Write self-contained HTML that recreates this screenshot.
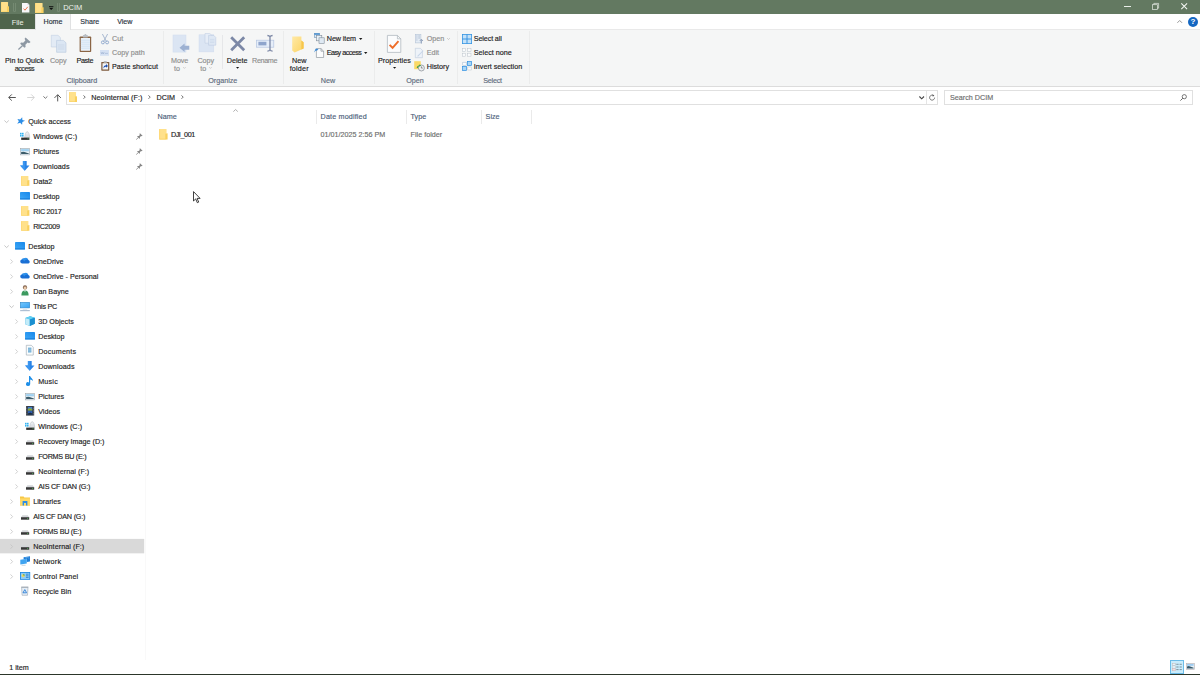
<!DOCTYPE html>
<html><head><meta charset="utf-8"><title>DCIM</title>
<style>
*{margin:0;padding:0;box-sizing:border-box}
html,body{width:1200px;height:675px;overflow:hidden;background:#fff}
body{position:relative;font-family:"Liberation Sans",sans-serif;font-size:7.2px;color:#1c1c1c;line-height:1}
.a{position:absolute;display:block}
.t{position:absolute;white-space:nowrap;line-height:10px;height:10px;-webkit-text-stroke:.15px currentColor}
.g{color:#8e8e8e}
.c{text-align:center}
svg{overflow:visible}
</style></head><body>
<svg class="a" width="0" height="0" style="left:0;top:0"><defs><linearGradient id="dg" x1="0" y1="1" x2="1" y2="0"><stop offset="0" stop-color="#3fa9f7"/><stop offset="1" stop-color="#1787ea"/></linearGradient><linearGradient id="pcg" x1="0" y1="0" x2="1" y2="1"><stop offset="0" stop-color="#74c7fc"/><stop offset="1" stop-color="#36a2f4"/></linearGradient><linearGradient id="nf" x1="0" y1="0" x2="1" y2="1"><stop offset="0" stop-color="#ffe9a6"/><stop offset="1" stop-color="#fcd462"/></linearGradient></defs></svg>
<div class="a" style="left:0px;top:0px;width:1200px;height:14px;background:#637961;"></div>
<svg class="a" style="left:1.2px;top:2px" width="8" height="10" viewBox="0 0 8.4 10" preserveAspectRatio="none"><rect x="0" y="0" width="7.4" height="10" rx=".5" fill="#ffe18b"/><path d="M6.2 4.5 L8.4 4.2 L8.4 10 L0.6 10 L0.6 9.4 L6.2 9.4 Z" fill="#f9d05e"/><rect x="0" y="0" width="1" height="10" fill="#ffd670" opacity=".6"/></svg>
<svg class="a" style="left:13px;top:3px" width="3" height="9" viewBox="0 0 3 9" ><path d="M.5 0 V8 Q.5 8.6 1.1 8.6 H1.9 Q2.5 8.6 2.5 8 V0" fill="none" stroke="#8c9e89" stroke-width=".45"/></svg>
<svg class="a" style="left:22px;top:2.8px" width="7.4" height="9.4" viewBox="0 0 7.4 9.4" ><path d="M0 0 H5.6 L7.4 1.8 V9.4 H0Z" fill="#f7f8f9"/><path d="M5.6 0 V1.8 H7.4Z" fill="#c5cbd1"/><path d="M1.6 5.6 L3 7.2 L5.8 3.8" fill="none" stroke="#e8734a" stroke-width="1"/></svg>
<svg class="a" style="left:35.2px;top:2.6px" width="8.6" height="10" viewBox="0 0 8.4 10" preserveAspectRatio="none"><rect x="0" y="0" width="7.4" height="10" rx=".5" fill="#ffe18b"/><path d="M6.2 4.5 L8.4 4.2 L8.4 10 L0.6 10 L0.6 9.4 L6.2 9.4 Z" fill="#f9d05e"/><rect x="0" y="0" width="1" height="10" fill="#ffd670" opacity=".6"/></svg>
<svg class="a" style="left:48.8px;top:6.2px" width="4.4" height="4.2" viewBox="0 0 4.4 4.2" ><rect x="0" y="0" width="4.4" height=".8" fill="#111"/><path d="M0 1.7 H4.4 L2.2 4.1Z" fill="#111"/></svg>
<svg class="a" style="left:56.8px;top:3px" width="3" height="9" viewBox="0 0 3 9" ><path d="M.5 0 V8 Q.5 8.6 1.1 8.6 H1.9 Q2.5 8.6 2.5 8 V0" fill="none" stroke="#8c9e89" stroke-width=".45"/></svg>
<div class="t " style="left:63.2px;top:3px;color:#eef1ec;font-size:7.5px;-webkit-text-stroke:0">DCIM</div>
<div class="a" style="left:1124.2px;top:5.8px;width:6.6px;height:0.8px;background:#e9eee8;"></div>
<svg class="a" style="left:1152px;top:3px" width="7" height="7" viewBox="0 0 7 7" ><rect x=".4" y="1.7" width="5" height="4.9" fill="none" stroke="#e6ebe5" stroke-width=".7"/><path d="M1.8 1.7 V.4 H6.6 V5.2 H5.4" fill="none" stroke="#e6ebe5" stroke-width=".7"/></svg>
<svg class="a" style="left:1181.2px;top:3.2px" width="6.4" height="6.4" viewBox="0 0 6.4 6.4" ><path d="M.3 .3 L6.1 6.1 M6.1 .3 L.3 6.1" stroke="#f4f7f3" stroke-width="1.05"/></svg>
<div class="a" style="left:0px;top:14px;width:1200px;height:14.8px;background:#fff;"></div>
<div class="a" style="left:0px;top:13.8px;width:35px;height:14.8px;background:#4f644c;"></div>
<div class="t c " style="left:-42.4px;width:120px;top:18px;color:#f0f2ea;font-size:7.3px;-webkit-text-stroke:0">File</div>
<div class="a" style="left:0px;top:28.8px;width:1200px;height:58.2px;background:#f5f6f6;border-top:1px solid #e9e9e9;border-bottom:1px solid #dcdcdc"></div>
<div class="a" style="left:35px;top:14px;width:36px;height:15.8px;background:#f5f6f6;border:1px solid #e0e1e2;border-bottom:none;border-top:none"></div>
<div class="t c " style="left:-7px;width:120px;top:17px;font-size:7.1px;color:#2a3340">Home</div>
<div class="t c " style="left:29.799999999999997px;width:120px;top:17px;font-size:7.1px;color:#2a3340">Share</div>
<div class="t c " style="left:64.8px;width:120px;top:17px;font-size:7.1px;color:#2a3340">View</div>
<svg class="a" style="left:1176.7px;top:19.7px" width="5.4" height="3.2" viewBox="0 0 5.4 3.2" ><path d="M.4 2.8 L2.7 .5 L5 2.8" fill="none" stroke="#8a8a8a" stroke-width=".9"/></svg>
<div class="a" style="left:1187.9px;top:16.6px;width:10px;height:10px;border-radius:5px;background:#1467c2;color:#fff;font-weight:bold;font-size:8px;line-height:10px;text-align:center">?</div>
<div class="a" style="left:163.2px;top:31.4px;width:0.8px;height:52.4px;background:#ebecec;"></div>
<div class="a" style="left:283.1px;top:31.4px;width:0.8px;height:52.4px;background:#ebecec;"></div>
<div class="a" style="left:373.6px;top:31.4px;width:0.8px;height:52.4px;background:#ebecec;"></div>
<div class="a" style="left:456.70000000000005px;top:31.4px;width:0.8px;height:52.4px;background:#ebecec;"></div>
<div class="a" style="left:528.9px;top:31.4px;width:0.8px;height:52.4px;background:#ebecec;"></div>
<div class="a" style="left:221.7px;top:35px;width:0.8px;height:34px;background:#e6e7e9;"></div>
<div class="t c " style="left:21.799999999999997px;width:120px;top:76px;color:#5d6b7c">Clipboard</div>
<div class="t c " style="left:162.8px;width:120px;top:76px;color:#5d6b7c">Organize</div>
<div class="t c " style="left:268px;width:120px;top:76px;color:#5d6b7c">New</div>
<div class="t c " style="left:355px;width:120px;top:76px;color:#5d6b7c">Open</div>
<div class="t c " style="left:432.5px;width:120px;top:76px;color:#5d6b7c;letter-spacing:-.25px">Select</div>
<svg class="a" style="left:17.8px;top:37.3px" width="13" height="12.6" viewBox="0 0 13 12.6" ><path d="M7.6 .4 L12.6 5 L11 6.2 L9.6 5.6 L7.4 7.8 L7.6 10 L6.4 10.8 L2.2 6.8 L3 5.6 L5.2 5.8 L7.4 3.6 L6.6 1.8Z" fill="#8d98a3"/><path d="M4.4 8.8 L.4 12.4" stroke="#8d98a3" stroke-width="1.3"/></svg>
<div class="t c " style="left:-35.6px;width:120px;top:56px;">Pin to Quick</div>
<div class="t c " style="left:-35.6px;width:120px;top:64px;letter-spacing:-.5px">access</div>
<svg class="a" style="left:51px;top:35px" width="15.4" height="17.6" viewBox="0 0 15.4 17.6" ><path d="M.3 .3 H7 L9.4 2.6 V12 H.3Z" fill="#e3ebf5" stroke="#c3d0e2" stroke-width=".6"/><path d="M5.6 5.4 H12.4 L15 7.8 V17.3 H5.6Z" fill="#dbe6f3" stroke="#b7c7de" stroke-width=".6"/><path d="M7 10H13.4M7 12H13.4M7 14H13.4" stroke="#c5d3e6" stroke-width=".6"/></svg>
<div class="t c g" style="left:-1.7000000000000028px;width:120px;top:56px;">Copy</div>
<svg class="a" style="left:78.6px;top:34.2px" width="12.8" height="18.4" viewBox="0 0 12.8 18.4" ><rect x=".6" y="2.4" width="11.6" height="15.6" rx=".8" fill="#8a6545"/><rect x="1.8" y="4" width="9.2" height="12.8" fill="#e9f2fa"/><path d="M1.8 6.2H11M1.8 8.2H11M1.8 10.2H11M1.8 12.2H11M1.8 14.2H11" stroke="#c4dcf0" stroke-width=".6"/><rect x="4" y="1" width="4.8" height="2.6" rx=".6" fill="#b9bec4"/><rect x="5.6" y="0" width="1.6" height="1.6" fill="#b9bec4"/></svg>
<div class="t c " style="left:24.799999999999997px;width:120px;top:56px;letter-spacing:-.4px">Paste</div>
<svg class="a" style="left:101px;top:33.8px" width="8" height="10.4" viewBox="0 0 8 10.4" ><path d="M1.4 0 L5.4 7.6 M6.6 0 L2.6 7.6" stroke="#9fb1cc" stroke-width=".9" fill="none"/><circle cx="1.9" cy="8.4" r="1.5" fill="none" stroke="#7f9cc6" stroke-width=".8"/><circle cx="6.1" cy="8.4" r="1.5" fill="none" stroke="#7f9cc6" stroke-width=".8"/></svg>
<div class="t g" style="left:112px;top:34px;">Cut</div>
<svg class="a" style="left:100px;top:50px" width="9" height="5.8" viewBox="0 0 9 5.8" ><rect width="9" height="5.8" fill="#d5e1f3"/><path d="M1 2 L1.8 4 L2.6 2.4 L3.4 4 L4.2 2 M5 3.4 H8" stroke="#8fa5c8" stroke-width=".5" fill="none"/></svg>
<div class="t g" style="left:112px;top:48px;">Copy path</div>
<svg class="a" style="left:100.6px;top:61.2px" width="8.6" height="10" viewBox="0 0 8.6 10" ><rect x=".3" y="1" width="8" height="8.7" rx=".6" fill="#7d5a3c"/><rect x="1.5" y="2.2" width="5.6" height="6.3" fill="#f3f6f9"/><rect x="2.8" y="0" width="3" height="1.8" rx=".4" fill="#b9bec4"/><path d="M2.4 7.6 C2.4 5.2 3.6 4.2 5 4.2 V3 L7 4.9 L5 6.8 V5.7 C3.8 5.7 3 6.2 2.4 7.6Z" fill="#1a4db0"/></svg>
<div class="t " style="left:112px;top:62px;">Paste shortcut</div>
<svg class="a" style="left:173px;top:35.2px" width="16.6" height="17.4" viewBox="0 0 16.6 17.4" ><rect width="13" height="17.1" fill="#dbe5f3" stroke="#d0dcee" stroke-width=".5"/><path d="M16.3 10.8 V14.8 H11.6 V17.1 L6.5 12.8 L11.6 8.5 V10.8Z" fill="#9db1d2"/></svg>
<div class="t c g" style="left:119.6px;width:120px;top:56px;letter-spacing:-.15px">Move</div>
<div class="t g" style="left:174px;top:64px;">to</div>
<svg class="a" style="left:182.6px;top:67px" width="2.8" height="1.7" viewBox="0 0 2.8 1.7" ><path d="M.2 .2 L1.4 1.4 L2.6 .2" stroke="#b0b0b0" stroke-width=".6" fill="none"/></svg>
<svg class="a" style="left:199.1px;top:33.4px" width="17" height="19.2" viewBox="0 0 17 19.2" ><rect x="0" y="1.8" width="14.8" height="17.1" fill="#dbe5f3" stroke="#d0dcee" stroke-width=".5"/><path d="M6 .5 H10.8 L12.6 2.2 V10.2 H6Z" fill="#e6edf7" stroke="#bccbe0" stroke-width=".5"/><path d="M9.6 2.4 H14.8 L16.8 4.4 V12.2 H9.6Z" fill="#dfe8f4" stroke="#b7c7de" stroke-width=".5"/><path d="M11 6.4H15.4M11 8H15.4M11 9.6H15.4" stroke="#c2d0e4" stroke-width=".5"/></svg>
<div class="t c g" style="left:145.8px;width:120px;top:56px;">Copy</div>
<div class="t g" style="left:200.3px;top:64px;">to</div>
<svg class="a" style="left:208.9px;top:67px" width="2.8" height="1.7" viewBox="0 0 2.8 1.7" ><path d="M.2 .2 L1.4 1.4 L2.6 .2" stroke="#b0b0b0" stroke-width=".6" fill="none"/></svg>
<svg class="a" style="left:229.8px;top:36px" width="15.4" height="15.4" viewBox="0 0 15.4 15.4" ><path d="M1.2 1.2 L14.2 14.2 M14.2 1.2 L1.2 14.2" stroke="#7c88a6" stroke-width="2.8"/></svg>
<div class="t c " style="left:177.2px;width:120px;top:56px;">Delete</div>
<svg class="a" style="left:235.6px;top:67.2px" width="3.2" height="1.8" viewBox="0 0 3.2 1.8" ><path d="M0 0 H3.2 L1.6 1.8Z" fill="#111"/></svg>
<svg class="a" style="left:255.8px;top:35.2px" width="18.4" height="16.6" viewBox="0 0 18.4 16.6" ><rect x=".4" y="5.2" width="17.4" height="7" fill="#e6eef9" stroke="#b4c5e0" stroke-width=".7"/><rect x="2.4" y="6.8" width="8" height="3.6" fill="#8fa5cc"/><path d="M11.4 .5 C12.8 .5 13.6 1 14 1.8 C14.4 1 15.2 .5 16.6 .5 M11.4 16.1 C12.8 16.1 13.6 15.6 14 14.8 C14.4 15.6 15.2 16.1 16.6 16.1 M14 1.8 V14.8" stroke="#7c88a6" stroke-width="1.3" fill="none"/></svg>
<div class="t c g" style="left:204.60000000000002px;width:120px;top:56px;letter-spacing:-.36px">Rename</div>
<svg class="a" style="left:292px;top:36px" width="11.8" height="16.6" viewBox="0 0 11.8 16.6" ><path d="M.2 .6 H9.4 V4.6 L11.6 6.2 V12.6 L2.6 16.4 L.2 14.6Z" fill="url(#nf)"/><path d="M9.4 4.6 L11.6 6.2 V12.6 L9.4 13.5Z" fill="#f6c64c"/></svg>
<div class="t c " style="left:239.2px;width:120px;top:56px;">New</div>
<div class="t c " style="left:239.2px;width:120px;top:64px;letter-spacing:.18px">folder</div>
<svg class="a" style="left:314px;top:33.2px" width="10.6" height="10.6" viewBox="0 0 10.6 10.6" ><rect x=".3" y=".3" width="5.4" height="4.4" fill="#dbeaf7" stroke="#6f94b8" stroke-width=".6"/><rect x=".3" y=".3" width="5.4" height="1.5" fill="#4a90d0"/><rect x="2.6" y="2.6" width="5.2" height="5.2" fill="#e9f1f8" stroke="#7f8c98" stroke-width=".6"/><rect x="5" y="4.8" width="5.2" height="5.5" fill="#dfe9f3" stroke="#7f8c98" stroke-width=".6"/></svg>
<div class="t " style="left:326.8px;top:34px;letter-spacing:-.1px">New item</div>
<svg class="a" style="left:358.5px;top:37.8px" width="3.4" height="2" viewBox="0 0 3.4 2" ><path d="M0 0 H3.4 L1.7 2Z" fill="#1a1a1a"/></svg>
<svg class="a" style="left:314.2px;top:47.2px" width="10" height="10.8" viewBox="0 0 10 10.8" ><path d="M2.4 1.6 H7 L9.6 4.2 V10.5 H2.4Z" fill="#fbfcfd" stroke="#7f8890" stroke-width=".6"/><path d="M7 1.6 V4.2 H9.6" fill="none" stroke="#7f8890" stroke-width=".6"/><path d="M0 5.6 L1.6 1.8 L4.6 1.8 L3.2 3.6 L1.6 3.8 Z" fill="#3b8ad6"/></svg>
<div class="t " style="left:326.8px;top:48px;letter-spacing:-.52px">Easy access</div>
<svg class="a" style="left:364.2px;top:51.7px" width="3.4" height="2" viewBox="0 0 3.4 2" ><path d="M0 0 H3.4 L1.7 2Z" fill="#1a1a1a"/></svg>
<svg class="a" style="left:387px;top:35px" width="14.2" height="17.8" viewBox="0 0 14.2 17.8" ><path d="M.4 .4 H10.4 L13.8 3.8 V17.4 H.4Z" fill="#fbfcfd" stroke="#a9b1b9" stroke-width=".7"/><path d="M10.4 .4 V3.8 H13.8" fill="none" stroke="#a9b1b9" stroke-width=".7"/><path d="M2.6 9.8 L5.6 12.8 L11.5 6.2" fill="none" stroke="#ee6d2a" stroke-width="1.9"/></svg>
<div class="t c " style="left:334.4px;width:120px;top:56px;">Properties</div>
<svg class="a" style="left:392.6px;top:67.3px" width="3.2" height="1.8" viewBox="0 0 3.2 1.8" ><path d="M0 0 H3.2 L1.6 1.8Z" fill="#111"/></svg>
<svg class="a" style="left:415.2px;top:33.8px" width="8.2" height="9.8" viewBox="0 0 8.2 9.8" ><rect x=".3" y=".3" width="5.6" height="8.6" fill="#e4ecf5" stroke="#b6c4d6" stroke-width=".6"/><path d="M1.4 2H2.4M1.4 4H2.4M1.4 6H2.4M3.4 2H4.8M3.4 4H4.8" stroke="#8a9db8" stroke-width=".7"/><path d="M6.4 9.6 V5.6 M4.8 7 L6.4 5.2 L8 7" stroke="#8a9db8" stroke-width=".9" fill="none"/></svg>
<div class="t g" style="left:426.7px;top:34px;">Open</div>
<svg class="a" style="left:447.4px;top:38px" width="3" height="1.8" viewBox="0 0 3 1.8" ><path d="M.2 .2 L1.5 1.5 L2.8 .2" stroke="#aaa" stroke-width=".6" fill="none"/></svg>
<svg class="a" style="left:415.2px;top:47.6px" width="8.8" height="10" viewBox="0 0 8.8 10" ><path d="M.3 .3 H5.4 L7.4 2.3 V9.7 H.3Z" fill="#eef3f9" stroke="#bccadb" stroke-width=".6"/><path d="M2.2 8 L7.8 2.4 L8.5 3.1 L3 8.7Z" fill="#c7d5e8"/></svg>
<div class="t g" style="left:426.7px;top:48px;">Edit</div>
<svg class="a" style="left:413.8px;top:61.2px" width="10.8" height="10.2" viewBox="0 0 10.8 10.2" ><rect x=".2" y=".2" width="6.6" height="8" fill="#fbd968"/><circle cx="7.4" cy="7" r="3" fill="#eef0f2" stroke="#7f868d" stroke-width=".7"/><path d="M7.4 5.4 V7.1 H8.8" stroke="#555" stroke-width=".6" fill="none"/><path d="M2.6 6.6 A3.4 3.4 0 0 1 5.6 4.2 L5.2 3.2 L7 4.6 L5.4 5.8 L5.6 5 A2.4 2.4 0 0 0 3.6 7.2Z" fill="#2f9a45"/></svg>
<div class="t " style="left:426.7px;top:62px;">History</div>
<svg class="a" style="left:461.8px;top:33.8px" width="10" height="10" viewBox="0 0 10 10" ><rect x=".4" y=".4" width="9.2" height="9.2" fill="#c4e2f9" stroke="#3695e3" stroke-width=".8"/><path d="M5 .4V9.6M.4 5H9.6" stroke="#2f8fe0" stroke-width=".9"/></svg>
<div class="t " style="left:473.8px;top:34px;letter-spacing:-.13px">Select all</div>
<svg class="a" style="left:462px;top:48.4px" width="9.6" height="8.8" viewBox="0 0 9.6 8.8" ><rect x=".3" y=".3" width="3.4" height="3" fill="#fbfcfd" stroke="#b9c1c9" stroke-width=".5"/><rect x="5.6" y=".3" width="3.4" height="3" fill="#fbfcfd" stroke="#b9c1c9" stroke-width=".5"/><rect x=".3" y="5.2" width="3.4" height="3" fill="#fbfcfd" stroke="#b9c1c9" stroke-width=".5"/><rect x="5.6" y="5.2" width="3.4" height="3" fill="#fbfcfd" stroke="#b9c1c9" stroke-width=".5"/></svg>
<div class="t " style="left:473.8px;top:48px;">Select none</div>
<svg class="a" style="left:461.8px;top:61.2px" width="10" height="10" viewBox="0 0 10 10" ><rect x="5.4" y=".4" width="4.2" height="4.2" fill="#a8d6f7" stroke="#2f8fe0" stroke-width=".7"/><rect x=".4" y="5.4" width="4.2" height="4.2" fill="#a8d6f7" stroke="#2f8fe0" stroke-width=".7"/><rect x=".8" y="1.2" width="3.4" height="3" fill="#fbfcfd" stroke="#9fb6cf" stroke-width=".5"/><rect x="5.8" y="6" width="3.4" height="3" fill="#fbfcfd" stroke="#b9c1c9" stroke-width=".5"/></svg>
<div class="t " style="left:473.8px;top:62px;">Invert selection</div>
<div class="a" style="left:0px;top:87px;width:1200px;height:23px;background:#fff;"></div>
<svg class="a" style="left:8px;top:93.8px" width="8" height="7" viewBox="0 0 8 7" ><path d="M7.8 3.5 H.8 M3.8 .4 L.7 3.5 L3.8 6.6" fill="none" stroke="#555" stroke-width="1"/></svg>
<svg class="a" style="left:26.6px;top:93.8px" width="8" height="7" viewBox="0 0 8 7" ><path d="M.2 3.5 H7.2 M4.2 .4 L7.3 3.5 L4.2 6.6" fill="none" stroke="#cdcdcd" stroke-width=".85"/></svg>
<svg class="a" style="left:42.8px;top:95.8px" width="4.8" height="2.8" viewBox="0 0 4.8 2.8" ><path d="M.4 .4 L2.4 2.3 L4.4 .4" fill="none" stroke="#707070" stroke-width=".95"/></svg>
<svg class="a" style="left:54.4px;top:93.6px" width="7.4" height="7.6" viewBox="0 0 7.4 7.6" ><path d="M3.7 7.4 V.8 M.5 3.9 L3.7 .7 L6.9 3.9" fill="none" stroke="#555" stroke-width="1"/></svg>
<div class="a" style="left:66.3px;top:90px;width:871.7px;height:15px;background:#fff;border:1px solid #e0e0e0"></div>
<svg class="a" style="left:69.2px;top:91.8px" width="8" height="10" viewBox="0 0 8.4 10" preserveAspectRatio="none"><rect x="0" y="0" width="7.4" height="10" rx=".5" fill="#ffe18b"/><path d="M6.2 4.5 L8.4 4.2 L8.4 10 L0.6 10 L0.6 9.4 L6.2 9.4 Z" fill="#f9d05e"/><rect x="0" y="0" width="1" height="10" fill="#ffd670" opacity=".6"/></svg>
<svg class="a" style="left:82.7px;top:95.2px" width="2.8" height="4.2" viewBox="0 0 2.8 4.2" ><path d="M.5 .4 L2.2 2.1 L.5 3.8" fill="none" stroke="#5e5e5e" stroke-width=".9"/></svg>
<div class="t " style="left:91.3px;top:93px;letter-spacing:.05px">NeoInternal (F:)</div>
<svg class="a" style="left:147.9px;top:95.2px" width="2.8" height="4.2" viewBox="0 0 2.8 4.2" ><path d="M.5 .4 L2.2 2.1 L.5 3.8" fill="none" stroke="#5e5e5e" stroke-width=".9"/></svg>
<div class="t " style="left:156.6px;top:93px;">DCIM</div>
<svg class="a" style="left:181.3px;top:95.2px" width="2.8" height="4.2" viewBox="0 0 2.8 4.2" ><path d="M.5 .4 L2.2 2.1 L.5 3.8" fill="none" stroke="#5e5e5e" stroke-width=".9"/></svg>
<svg class="a" style="left:918.6px;top:95.8px" width="5.4" height="3.4" viewBox="0 0 5.4 3.4" ><path d="M.4 .5 L2.7 2.8 L5 .5" fill="none" stroke="#444" stroke-width="1.15"/></svg>
<div class="a" style="left:925.6px;top:91px;width:0.8px;height:13px;background:#e5e5e5;"></div>
<svg class="a" style="left:928.6px;top:94px" width="6.4" height="6.8" viewBox="0 0 6.4 6.8" ><path d="M5.6 3.6 A2.5 2.5 0 1 1 4.4 1.5" fill="none" stroke="#555" stroke-width=".8"/><path d="M3.4 .2 L5.4 1.4 L3.8 2.8Z" fill="#555"/></svg>
<div class="a" style="left:944px;top:90px;width:248.6px;height:15px;background:#fff;border:1px solid #e0e0e0"></div>
<div class="t " style="left:950px;top:93px;color:#6d6d6d">Search DCIM</div>
<svg class="a" style="left:1180px;top:93.8px" width="7" height="7" viewBox="0 0 7 7" ><circle cx="4.3" cy="2.7" r="2.1" fill="none" stroke="#555" stroke-width=".8"/><path d="M2.8 4.2 L.4 6.6" stroke="#555" stroke-width=".9"/></svg>
<div class="a" style="left:145.1px;top:110px;width:0.8px;height:550px;background:#f9f9f9;"></div>
<svg class="a" style="left:0px;top:538px" width="145" height="16" viewBox="0 0 145 16" ><rect x="0" y=".9" width="144.2" height="14.45" fill="#d9d9d9"/></svg>
<svg class="a" style="left:3.8px;top:119.60000000000001px" width="5.2" height="3.2" viewBox="0 0 5.2 3.2" ><path d="M.4 .5 L2.6 2.6 L4.8 .5" fill="none" stroke="#b2b2b2" stroke-width=".75"/></svg>
<svg class="a" style="left:16.8px;top:116.9px" width="7.8" height="7.4" viewBox="0 0 7.8 7.4" ><path transform="rotate(12 3.9 3.9) skewX(-8)" d="M4.4 0 L5.5 2.6 L8.3 2.8 L6.2 4.6 L6.9 7.4 L4.4 5.9 L1.9 7.4 L2.6 4.6 L.5 2.8 L3.3 2.6Z" fill="#2b8de6"/></svg>
<div class="t " style="left:28.2px;top:117px;">Quick access</div>
<svg class="a" style="left:20.0px;top:131.1px" width="10" height="9" viewBox="0 0 10 9" ><rect x="0" y="1.8" width="1.6" height="1.7" fill="#35b3f1"/><rect x="2" y="1.8" width="1.6" height="1.7" fill="#35b3f1"/><rect x="0" y="3.9" width="1.6" height="1.7" fill="#35b3f1"/><rect x="2" y="3.9" width="1.6" height="1.7" fill="#35b3f1"/><path d="M5.4 2.6 Q7.2 -1.4 9 2.6 L9.8 6.4 H4.6Z" fill="#e9ecef" stroke="#b4bac0" stroke-width=".5"/><path d="M5.2 4H9.3M5 5.2H9.5" stroke="#c2c8ce" stroke-width=".4"/><rect x="1.2" y="6.6" width="8.2" height="2.3" fill="#303030"/><rect x="7.4" y="7.4" width="1.2" height=".7" fill="#4fae5a"/></svg>
<div class="t " style="left:33.2px;top:132px;letter-spacing:0.07px">Windows (C:)</div>
<svg class="a" style="left:20.0px;top:147.5px" width="10" height="7.2" viewBox="0 0 10 7.2" ><rect x=".3" y=".3" width="9.4" height="6.6" fill="#f3f7fa" stroke="#9aa5ae" stroke-width=".6"/><rect x="1.1" y="1.1" width="7.8" height="2" fill="#9fd0f0"/><path d="M1.1 5.9 V3.9 L3.2 3.4 L8.9 5.4 V5.9Z" fill="#3a5b69"/><path d="M1.1 3.1 H8.9 V4.3 L3.8 3.4 L1.1 3.9Z" fill="#d3e6f1"/></svg>
<div class="t " style="left:33.2px;top:147px;">Pictures</div>
<svg class="a" style="left:20.2px;top:160.7px" width="9.6" height="9.8" viewBox="0 0 9.6 9.8" ><path d="M2.9 0 H6.7 V4.4 H9.5 L4.8 9.7 L.1 4.4 H2.9Z" fill="#2a84e6"/><path d="M2.9 0 H4.8 V9.7 L.1 4.4 H2.9Z" fill="#3b97f0"/></svg>
<div class="t " style="left:33.2px;top:162px;letter-spacing:0.1px">Downloads</div>
<svg class="a" style="left:20.8px;top:175.7px" width="8.4" height="9.8" viewBox="0 0 8.4 10" preserveAspectRatio="none"><rect x="0" y="0" width="7.4" height="10" rx=".5" fill="#ffe18b"/><path d="M6.2 4.5 L8.4 4.2 L8.4 10 L0.6 10 L0.6 9.4 L6.2 9.4 Z" fill="#f9d05e"/><rect x="0" y="0" width="1" height="10" fill="#ffd670" opacity=".6"/></svg>
<div class="t " style="left:33.2px;top:177px;">Data2</div>
<svg class="a" style="left:20.0px;top:191.9px" width="10" height="7.4" viewBox="0 0 10 7.4" ><rect width="10" height="7.4" rx=".4" fill="url(#dg)"/><rect x="0" y="6.4" width="10" height="1" fill="#1479d6"/></svg>
<div class="t " style="left:33.2px;top:192px;">Desktop</div>
<svg class="a" style="left:20.8px;top:205.7px" width="8.4" height="9.8" viewBox="0 0 8.4 10" preserveAspectRatio="none"><rect x="0" y="0" width="7.4" height="10" rx=".5" fill="#ffe18b"/><path d="M6.2 4.5 L8.4 4.2 L8.4 10 L0.6 10 L0.6 9.4 L6.2 9.4 Z" fill="#f9d05e"/><rect x="0" y="0" width="1" height="10" fill="#ffd670" opacity=".6"/></svg>
<div class="t " style="left:33.2px;top:207px;letter-spacing:-0.25px">RIC 2017</div>
<svg class="a" style="left:20.8px;top:220.7px" width="8.4" height="9.8" viewBox="0 0 8.4 10" preserveAspectRatio="none"><rect x="0" y="0" width="7.4" height="10" rx=".5" fill="#ffe18b"/><path d="M6.2 4.5 L8.4 4.2 L8.4 10 L0.6 10 L0.6 9.4 L6.2 9.4 Z" fill="#f9d05e"/><rect x="0" y="0" width="1" height="10" fill="#ffd670" opacity=".6"/></svg>
<div class="t " style="left:33.2px;top:222px;letter-spacing:-0.28px">RIC2009</div>
<svg class="a" style="left:3.8px;top:244.6px" width="5.2" height="3.2" viewBox="0 0 5.2 3.2" ><path d="M.4 .5 L2.6 2.6 L4.8 .5" fill="none" stroke="#b2b2b2" stroke-width=".75"/></svg>
<svg class="a" style="left:14.8px;top:241.9px" width="10" height="7.4" viewBox="0 0 10 7.4" ><rect width="10" height="7.4" rx=".4" fill="url(#dg)"/><rect x="0" y="6.4" width="10" height="1" fill="#1479d6"/></svg>
<div class="t " style="left:28.2px;top:242px;">Desktop</div>
<svg class="a" style="left:9.8px;top:258.59999999999997px" width="3.2" height="5.2" viewBox="0 0 3.2 5.2" ><path d="M.5 .4 L2.6 2.6 L.5 4.8" fill="none" stroke="#c2c2c2" stroke-width=".75"/></svg>
<svg class="a" style="left:19.8px;top:257.3px" width="10.4" height="6.6" viewBox="0 0 10.4 6.6" ><path d="M2.2 6.6 A2.1 2.1 0 0 1 1.7 2.5 A2.2 2.2 0 0 1 4 1.5 A3 3 0 0 1 8.4 2.9 A1.95 1.95 0 0 1 8.4 6.6 Z" fill="#1a6fd4"/><path d="M1.7 2.6 A2.2 2.2 0 0 1 4 1.5 A3 3 0 0 1 8.3 2.7 C6.5 2.3 5 3.2 4.2 4.4 C3.6 3.4 2.6 2.7 1.7 2.6Z" fill="#2e93ec"/></svg>
<div class="t " style="left:33.2px;top:257px;">OneDrive</div>
<svg class="a" style="left:9.8px;top:273.59999999999997px" width="3.2" height="5.2" viewBox="0 0 3.2 5.2" ><path d="M.5 .4 L2.6 2.6 L.5 4.8" fill="none" stroke="#c2c2c2" stroke-width=".75"/></svg>
<svg class="a" style="left:19.8px;top:272.3px" width="10.4" height="6.6" viewBox="0 0 10.4 6.6" ><path d="M2.2 6.6 A2.1 2.1 0 0 1 1.7 2.5 A2.2 2.2 0 0 1 4 1.5 A3 3 0 0 1 8.4 2.9 A1.95 1.95 0 0 1 8.4 6.6 Z" fill="#1a6fd4"/><path d="M1.7 2.6 A2.2 2.2 0 0 1 4 1.5 A3 3 0 0 1 8.3 2.7 C6.5 2.3 5 3.2 4.2 4.4 C3.6 3.4 2.6 2.7 1.7 2.6Z" fill="#2e93ec"/></svg>
<div class="t " style="left:33.2px;top:272px;">OneDrive - Personal</div>
<svg class="a" style="left:9.8px;top:288.59999999999997px" width="3.2" height="5.2" viewBox="0 0 3.2 5.2" ><path d="M.5 .4 L2.6 2.6 L.5 4.8" fill="none" stroke="#c2c2c2" stroke-width=".75"/></svg>
<svg class="a" style="left:21.0px;top:285.4px" width="8" height="10.4" viewBox="0 0 8 10.4" ><circle cx="4" cy="2.4" r="2.1" fill="#7a5a46"/><circle cx="4.1" cy="2.9" r="1.5" fill="#e9c9a8"/><path d="M0.4 10.4 C0.4 6.6 2 5.4 4 5.4 C6 5.4 7.6 6.6 7.6 10.4Z" fill="#3c9a5f"/><path d="M3.2 5.4 L4 7.2 L4.8 5.4Z" fill="#e8f0ea"/></svg>
<div class="t " style="left:33.2px;top:287px;">Dan Bayne</div>
<svg class="a" style="left:8.600000000000001px;top:304.59999999999997px" width="5.2" height="3.2" viewBox="0 0 5.2 3.2" ><path d="M.4 .5 L2.6 2.6 L4.8 .5" fill="none" stroke="#b2b2b2" stroke-width=".75"/></svg>
<svg class="a" style="left:20.0px;top:302px" width="10" height="9.4" viewBox="0 0 10 9.4" ><rect x=".3" y=".3" width="9.4" height="5.6" fill="url(#pcg)" stroke="#2f86c8" stroke-width=".6"/><path d="M3.2 6.3 H6.8 L7.4 8 H2.6Z" fill="#dfe8f0"/><rect x=".2" y="8" width="9.6" height="1.2" fill="#aebfd3"/></svg>
<div class="t " style="left:33.2px;top:302px;letter-spacing:-0.25px">This PC</div>
<svg class="a" style="left:14.9px;top:318.59999999999997px" width="3.2" height="5.2" viewBox="0 0 3.2 5.2" ><path d="M.5 .4 L2.6 2.6 L.5 4.8" fill="none" stroke="#c2c2c2" stroke-width=".75"/></svg>
<svg class="a" style="left:25.0px;top:315.5px" width="10" height="10.2" viewBox="0 0 10 10.2" ><path d="M.3 2 L5.2 .2 L9.8 1.8 L9.8 7.8 L4.8 10 L.3 8.2Z" fill="#27a5de"/><path d="M.3 2 L5.2 .2 L9.8 1.8 L4.8 3.4Z" fill="#5fd0f3"/><path d="M.3 2 L4.8 3.4 L4.8 10 L.3 8.2Z" fill="#c3ecf9"/><path d="M4.8 3.4 L9.8 1.8 L9.8 7.8 L4.8 10Z" fill="#1b8fd0"/></svg>
<div class="t " style="left:38.2px;top:317px;">3D Objects</div>
<svg class="a" style="left:14.9px;top:333.59999999999997px" width="3.2" height="5.2" viewBox="0 0 3.2 5.2" ><path d="M.5 .4 L2.6 2.6 L.5 4.8" fill="none" stroke="#c2c2c2" stroke-width=".75"/></svg>
<svg class="a" style="left:25.0px;top:331.9px" width="10" height="7.4" viewBox="0 0 10 7.4" ><rect width="10" height="7.4" rx=".4" fill="url(#dg)"/><rect x="0" y="6.4" width="10" height="1" fill="#1479d6"/></svg>
<div class="t " style="left:38.2px;top:332px;">Desktop</div>
<svg class="a" style="left:14.9px;top:348.59999999999997px" width="3.2" height="5.2" viewBox="0 0 3.2 5.2" ><path d="M.5 .4 L2.6 2.6 L.5 4.8" fill="none" stroke="#c2c2c2" stroke-width=".75"/></svg>
<svg class="a" style="left:26.2px;top:345.4px" width="7.6" height="10.4" viewBox="0 0 7.6 10.4" ><path d="M.3 .3 H5.4 L7.3 2.2 V10.1 H.3Z" fill="#fafcfd" stroke="#98a4ae" stroke-width=".6"/><rect x="2" y="2.4" width="3.4" height="5.4" fill="#9ccbe8"/><path d="M2 3.6H5.4M2 5H5.4M2 6.4H5.4" stroke="#5d9cc7" stroke-width=".5"/></svg>
<div class="t " style="left:38.2px;top:347px;letter-spacing:0.19px">Documents</div>
<svg class="a" style="left:14.9px;top:363.59999999999997px" width="3.2" height="5.2" viewBox="0 0 3.2 5.2" ><path d="M.5 .4 L2.6 2.6 L.5 4.8" fill="none" stroke="#c2c2c2" stroke-width=".75"/></svg>
<svg class="a" style="left:25.2px;top:360.7px" width="9.6" height="9.8" viewBox="0 0 9.6 9.8" ><path d="M2.9 0 H6.7 V4.4 H9.5 L4.8 9.7 L.1 4.4 H2.9Z" fill="#2a84e6"/><path d="M2.9 0 H4.8 V9.7 L.1 4.4 H2.9Z" fill="#3b97f0"/></svg>
<div class="t " style="left:38.2px;top:362px;letter-spacing:0.1px">Downloads</div>
<svg class="a" style="left:14.9px;top:378.59999999999997px" width="3.2" height="5.2" viewBox="0 0 3.2 5.2" ><path d="M.5 .4 L2.6 2.6 L.5 4.8" fill="none" stroke="#c2c2c2" stroke-width=".75"/></svg>
<svg class="a" style="left:26.2px;top:375.5px" width="7.6" height="10.2" viewBox="0 0 7.6 10.2" ><path d="M3 0 H4.2 C4.6 2 7.2 2.6 7 5.2 C6.6 3.8 5 3.6 4.2 3.4 V8 A2.1 1.9 0 1 1 3 6.4Z" fill="#1f8fe8"/></svg>
<div class="t " style="left:38.2px;top:377px;letter-spacing:0.2px">Music</div>
<svg class="a" style="left:14.9px;top:393.59999999999997px" width="3.2" height="5.2" viewBox="0 0 3.2 5.2" ><path d="M.5 .4 L2.6 2.6 L.5 4.8" fill="none" stroke="#c2c2c2" stroke-width=".75"/></svg>
<svg class="a" style="left:25.0px;top:392.5px" width="10" height="7.2" viewBox="0 0 10 7.2" ><rect x=".3" y=".3" width="9.4" height="6.6" fill="#f3f7fa" stroke="#9aa5ae" stroke-width=".6"/><rect x="1.1" y="1.1" width="7.8" height="2" fill="#9fd0f0"/><path d="M1.1 5.9 V3.9 L3.2 3.4 L8.9 5.4 V5.9Z" fill="#3a5b69"/><path d="M1.1 3.1 H8.9 V4.3 L3.8 3.4 L1.1 3.9Z" fill="#d3e6f1"/></svg>
<div class="t " style="left:38.2px;top:392px;">Pictures</div>
<svg class="a" style="left:14.9px;top:408.59999999999997px" width="3.2" height="5.2" viewBox="0 0 3.2 5.2" ><path d="M.5 .4 L2.6 2.6 L.5 4.8" fill="none" stroke="#c2c2c2" stroke-width=".75"/></svg>
<svg class="a" style="left:25.9px;top:405.8px" width="8.2" height="9.6" viewBox="0 0 8.2 9.6" ><rect width="8.2" height="9.6" fill="#353a42"/><rect x="1.9" y=".9" width="4.4" height="3.6" fill="#3f7fd0"/><path d="M1.9 3 L4 2 L6.3 3.2 V4.5 H1.9Z" fill="#8aa83a"/><rect x="1.9" y="5.1" width="4.4" height="3.6" fill="#2f62b8"/><path d="M1.9 7.4 L4.4 6.4 L6.3 7.6 V8.7 H1.9Z" fill="#1d2c3c"/><path d="M.5 1H1.2M.5 2.6H1.2M.5 4.2H1.2M.5 5.8H1.2M.5 7.4H1.2M.5 9H1.2M7 1H7.7M7 2.6H7.7M7 4.2H7.7M7 5.8H7.7M7 7.4H7.7M7 9H7.7" stroke="#c4c9cf" stroke-width=".6"/></svg>
<div class="t " style="left:38.2px;top:407px;">Videos</div>
<svg class="a" style="left:14.9px;top:423.59999999999997px" width="3.2" height="5.2" viewBox="0 0 3.2 5.2" ><path d="M.5 .4 L2.6 2.6 L.5 4.8" fill="none" stroke="#c2c2c2" stroke-width=".75"/></svg>
<svg class="a" style="left:25.0px;top:421.1px" width="10" height="9" viewBox="0 0 10 9" ><rect x="0" y="1.8" width="1.6" height="1.7" fill="#35b3f1"/><rect x="2" y="1.8" width="1.6" height="1.7" fill="#35b3f1"/><rect x="0" y="3.9" width="1.6" height="1.7" fill="#35b3f1"/><rect x="2" y="3.9" width="1.6" height="1.7" fill="#35b3f1"/><path d="M5.4 2.6 Q7.2 -1.4 9 2.6 L9.8 6.4 H4.6Z" fill="#e9ecef" stroke="#b4bac0" stroke-width=".5"/><path d="M5.2 4H9.3M5 5.2H9.5" stroke="#c2c8ce" stroke-width=".4"/><rect x="1.2" y="6.6" width="8.2" height="2.3" fill="#303030"/><rect x="7.4" y="7.4" width="1.2" height=".7" fill="#4fae5a"/></svg>
<div class="t " style="left:38.2px;top:422px;letter-spacing:0.07px">Windows (C:)</div>
<svg class="a" style="left:14.9px;top:438.59999999999997px" width="3.2" height="5.2" viewBox="0 0 3.2 5.2" ><path d="M.5 .4 L2.6 2.6 L.5 4.8" fill="none" stroke="#c2c2c2" stroke-width=".75"/></svg>
<svg class="a" style="left:25.9px;top:440.2px" width="8.2" height="4.8" viewBox="0 0 8.2 4.8" ><path d="M1.4 .2 H6.8 L8.2 2.3 H0Z" fill="#d3d6d9"/><rect x="0" y="2.2" width="8.2" height="2.5" fill="#373737"/><rect x="6" y="3" width="1.2" height=".8" fill="#4fae5a"/></svg>
<div class="t " style="left:38.2px;top:437px;">Recovery Image (D:)</div>
<svg class="a" style="left:14.9px;top:453.59999999999997px" width="3.2" height="5.2" viewBox="0 0 3.2 5.2" ><path d="M.5 .4 L2.6 2.6 L.5 4.8" fill="none" stroke="#c2c2c2" stroke-width=".75"/></svg>
<svg class="a" style="left:25.9px;top:455.2px" width="8.2" height="4.8" viewBox="0 0 8.2 4.8" ><path d="M1.4 .2 H6.8 L8.2 2.3 H0Z" fill="#d3d6d9"/><rect x="0" y="2.2" width="8.2" height="2.5" fill="#373737"/><rect x="6" y="3" width="1.2" height=".8" fill="#4fae5a"/></svg>
<div class="t " style="left:38.2px;top:452px;letter-spacing:-0.25px">FORMS BU (E:)</div>
<svg class="a" style="left:14.9px;top:468.59999999999997px" width="3.2" height="5.2" viewBox="0 0 3.2 5.2" ><path d="M.5 .4 L2.6 2.6 L.5 4.8" fill="none" stroke="#c2c2c2" stroke-width=".75"/></svg>
<svg class="a" style="left:25.9px;top:470.2px" width="8.2" height="4.8" viewBox="0 0 8.2 4.8" ><path d="M1.4 .2 H6.8 L8.2 2.3 H0Z" fill="#d3d6d9"/><rect x="0" y="2.2" width="8.2" height="2.5" fill="#373737"/><rect x="6" y="3" width="1.2" height=".8" fill="#4fae5a"/></svg>
<div class="t " style="left:38.2px;top:467px;letter-spacing:0.05px">NeoInternal (F:)</div>
<svg class="a" style="left:14.9px;top:483.59999999999997px" width="3.2" height="5.2" viewBox="0 0 3.2 5.2" ><path d="M.5 .4 L2.6 2.6 L.5 4.8" fill="none" stroke="#c2c2c2" stroke-width=".75"/></svg>
<svg class="a" style="left:25.9px;top:485.2px" width="8.2" height="4.8" viewBox="0 0 8.2 4.8" ><path d="M1.4 .2 H6.8 L8.2 2.3 H0Z" fill="#d3d6d9"/><rect x="0" y="2.2" width="8.2" height="2.5" fill="#373737"/><rect x="6" y="3" width="1.2" height=".8" fill="#4fae5a"/></svg>
<div class="t " style="left:38.2px;top:482px;letter-spacing:-0.17px">AIS CF DAN (G:)</div>
<svg class="a" style="left:9.8px;top:498.59999999999997px" width="3.2" height="5.2" viewBox="0 0 3.2 5.2" ><path d="M.5 .4 L2.6 2.6 L.5 4.8" fill="none" stroke="#c2c2c2" stroke-width=".75"/></svg>
<svg class="a" style="left:20.0px;top:495.8px" width="10" height="9.6" viewBox="0 0 10 9.6" ><path d="M0 .6 H3.6 L4.4 1.6 H10 V9.6 H0Z" fill="#f7c744"/><rect x="0" y="2.4" width="10" height="7.2" fill="#ffd968"/><path d="M2.6 9.6 V5 H7.4 V9.6 H6 V7 H4 V9.6Z" fill="#2d8fe6"/></svg>
<div class="t " style="left:33.2px;top:497px;">Libraries</div>
<svg class="a" style="left:9.8px;top:513.6px" width="3.2" height="5.2" viewBox="0 0 3.2 5.2" ><path d="M.5 .4 L2.6 2.6 L.5 4.8" fill="none" stroke="#c2c2c2" stroke-width=".75"/></svg>
<svg class="a" style="left:20.9px;top:515.2px" width="8.2" height="4.8" viewBox="0 0 8.2 4.8" ><path d="M1.4 .2 H6.8 L8.2 2.3 H0Z" fill="#d3d6d9"/><rect x="0" y="2.2" width="8.2" height="2.5" fill="#373737"/><rect x="6" y="3" width="1.2" height=".8" fill="#4fae5a"/></svg>
<div class="t " style="left:33.2px;top:512px;letter-spacing:-0.17px">AIS CF DAN (G:)</div>
<svg class="a" style="left:9.8px;top:528.6px" width="3.2" height="5.2" viewBox="0 0 3.2 5.2" ><path d="M.5 .4 L2.6 2.6 L.5 4.8" fill="none" stroke="#c2c2c2" stroke-width=".75"/></svg>
<svg class="a" style="left:20.9px;top:530.2px" width="8.2" height="4.8" viewBox="0 0 8.2 4.8" ><path d="M1.4 .2 H6.8 L8.2 2.3 H0Z" fill="#d3d6d9"/><rect x="0" y="2.2" width="8.2" height="2.5" fill="#373737"/><rect x="6" y="3" width="1.2" height=".8" fill="#4fae5a"/></svg>
<div class="t " style="left:33.2px;top:527px;letter-spacing:-0.25px">FORMS BU (E:)</div>
<svg class="a" style="left:9.8px;top:543.6px" width="3.2" height="5.2" viewBox="0 0 3.2 5.2" ><path d="M.5 .4 L2.6 2.6 L.5 4.8" fill="none" stroke="#c2c2c2" stroke-width=".75"/></svg>
<svg class="a" style="left:20.9px;top:545.2px" width="8.2" height="4.8" viewBox="0 0 8.2 4.8" ><path d="M1.4 .2 H6.8 L8.2 2.3 H0Z" fill="#d3d6d9"/><rect x="0" y="2.2" width="8.2" height="2.5" fill="#373737"/><rect x="6" y="3" width="1.2" height=".8" fill="#4fae5a"/></svg>
<div class="t " style="left:33.2px;top:542px;letter-spacing:0.05px">NeoInternal (F:)</div>
<svg class="a" style="left:9.8px;top:558.6px" width="3.2" height="5.2" viewBox="0 0 3.2 5.2" ><path d="M.5 .4 L2.6 2.6 L.5 4.8" fill="none" stroke="#c2c2c2" stroke-width=".75"/></svg>
<svg class="a" style="left:19.8px;top:555.8px" width="10.4" height="9.6" viewBox="0 0 10.4 9.6" ><path d="M3.6 1.2 L10 .2 V5.4 L6.8 6 V2.8 L3.6 3.3Z" fill="#1f7dd6"/><path d="M5 1.9 Q7.4 0.6 9.2 2.2" stroke="#7cc0f5" stroke-width=".5" fill="none"/><path d="M.3 3.7 L6.8 2.7 V7.6 L.3 8.6Z" fill="#3fa4f1"/><path d="M1.6 9.3 H5.6" stroke="#9fb8cc" stroke-width=".6"/></svg>
<div class="t " style="left:33.2px;top:557px;letter-spacing:0.24px">Network</div>
<svg class="a" style="left:9.8px;top:573.6px" width="3.2" height="5.2" viewBox="0 0 3.2 5.2" ><path d="M.5 .4 L2.6 2.6 L.5 4.8" fill="none" stroke="#c2c2c2" stroke-width=".75"/></svg>
<svg class="a" style="left:19.9px;top:571.7px" width="10.2" height="7.8" viewBox="0 0 10.2 7.8" ><rect width="10.2" height="7.8" fill="#1c86e0"/><rect x=".8" y=".8" width="8.6" height="6.2" fill="#8ccbf6"/><circle cx="3.2" cy="3.6" r="1.7" fill="#e9d36a"/><path d="M3.2 3.6 V1.9 A1.7 1.7 0 0 1 4.9 3.6Z" fill="#4ea85a"/><path d="M6 2.2H8.6M6 3.8H8.6M6 5.4H8.6" stroke="#1a6fc0" stroke-width=".7"/></svg>
<div class="t " style="left:33.2px;top:572px;letter-spacing:0.12px">Control Panel</div>
<svg class="a" style="left:21.2px;top:585.8px" width="7.6" height="9.6" viewBox="0 0 7.6 9.6" ><path d="M.6 1.4 H7 L6.5 9.3 H1.1Z" fill="#e6eef7" stroke="#9aa6b2" stroke-width=".6"/><path d="M.2 1.1 H7.4" stroke="#8f9aa6" stroke-width=".8"/><path d="M3.8 3.6 L5.6 6.8 H2Z" fill="none" stroke="#2a7fd6" stroke-width=".9"/></svg>
<div class="t " style="left:33.2px;top:587px;">Recycle Bin</div>
<svg class="a" style="left:135.9px;top:133px" width="6.8" height="6.8" viewBox="0 0 13 12.8" ><path d="M7.6 .4 L12.6 5 L11 6.2 L9.6 5.6 L7.4 7.8 L7.6 10 L6.4 10.8 L2.2 6.8 L3 5.6 L5.2 5.8 L7.4 3.6 L6.6 1.8Z" fill="#858585"/><path d="M4.4 8.8 L.4 12.4" stroke="#858585" stroke-width="1.5"/></svg>
<svg class="a" style="left:135.9px;top:148px" width="6.8" height="6.8" viewBox="0 0 13 12.8" ><path d="M7.6 .4 L12.6 5 L11 6.2 L9.6 5.6 L7.4 7.8 L7.6 10 L6.4 10.8 L2.2 6.8 L3 5.6 L5.2 5.8 L7.4 3.6 L6.6 1.8Z" fill="#858585"/><path d="M4.4 8.8 L.4 12.4" stroke="#858585" stroke-width="1.5"/></svg>
<svg class="a" style="left:135.9px;top:163px" width="6.8" height="6.8" viewBox="0 0 13 12.8" ><path d="M7.6 .4 L12.6 5 L11 6.2 L9.6 5.6 L7.4 7.8 L7.6 10 L6.4 10.8 L2.2 6.8 L3 5.6 L5.2 5.8 L7.4 3.6 L6.6 1.8Z" fill="#858585"/><path d="M4.4 8.8 L.4 12.4" stroke="#858585" stroke-width="1.5"/></svg>
<div class="t " style="left:157.6px;top:112px;color:#4c607a">Name</div>
<div class="t " style="left:320.6px;top:112px;color:#4c607a;letter-spacing:.15px">Date modified</div>
<div class="t " style="left:410.6px;top:112px;color:#4c607a">Type</div>
<div class="t " style="left:485.6px;top:112px;color:#4c607a">Size</div>
<div class="a" style="left:316px;top:109.6px;width:0.8px;height:14.6px;background:#eaeaea;"></div>
<div class="a" style="left:406.4px;top:109.6px;width:0.8px;height:14.6px;background:#eaeaea;"></div>
<div class="a" style="left:481px;top:109.6px;width:0.8px;height:14.6px;background:#eaeaea;"></div>
<div class="a" style="left:530.6px;top:109.6px;width:0.8px;height:14.6px;background:#eaeaea;"></div>
<svg class="a" style="left:232.7px;top:109px" width="5.2" height="3" viewBox="0 0 5.2 3" ><path d="M.4 2.6 L2.6 .5 L4.8 2.6" fill="none" stroke="#8a8a8a" stroke-width=".7"/></svg>
<svg class="a" style="left:158.8px;top:129.2px" width="8.6" height="10.4" viewBox="0 0 8.4 10" preserveAspectRatio="none"><rect x="0" y="0" width="7.4" height="10" rx=".5" fill="#ffe18b"/><path d="M6.2 4.5 L8.4 4.2 L8.4 10 L0.6 10 L0.6 9.4 L6.2 9.4 Z" fill="#f9d05e"/><rect x="0" y="0" width="1" height="10" fill="#ffd670" opacity=".6"/></svg>
<div class="t " style="left:170.9px;top:130px;letter-spacing:-.4px">DJI_001</div>
<div class="t " style="left:320.6px;top:130px;color:#6d6d6d">01/01/2025 2:56 PM</div>
<div class="t " style="left:410.6px;top:130px;color:#6d6d6d">File folder</div>
<svg class="a" style="left:193px;top:190.6px" width="8" height="12.4" viewBox="0 0 8 12.4" ><path d="M.5 .6 V10 L2.7 7.9 L4.3 11.7 L5.7 11.1 L4.1 7.4 H7.1Z" fill="#fff" stroke="#111" stroke-width=".8"/></svg>
<div class="t " style="left:9.2px;top:663px;">1 item</div>
<div class="a" style="left:1170px;top:660px;width:14px;height:14px;background:#c9ecfc;border:1px solid #6cbce8"></div>
<svg class="a" style="left:1172.2px;top:663.2px" width="10" height="8" viewBox="0 0 10 8" ><rect x=".2" y=".2" width="3" height="2.2" fill="#e6f4fb" stroke="#b9a9a9" stroke-width=".4"/><rect x=".2" y="2.9" width="3" height="2.2" fill="#e6f4fb" stroke="#b9b9b9" stroke-width=".4"/><rect x=".2" y="5.6" width="3" height="2.2" fill="#f3dede" stroke="#c9a9a9" stroke-width=".4"/><path d="M4.3 1.3H6.6M7.6 1.3H9.8M4.3 4H6.6M7.6 4H9.8M4.3 6.6H6.6M7.6 6.6H9.8" stroke="#5f6b73" stroke-width=".7"/></svg>
<svg class="a" style="left:1186.2px;top:663.2px" width="8.6" height="6.6" viewBox="0 0 8.6 6.6" ><rect x=".3" y=".3" width="8" height="6" fill="#e8f1f8" stroke="#b4aeb0" stroke-width=".6"/><rect x="1" y="1" width="6.6" height="1.8" fill="#9ccbf0"/><path d="M1 5.6 V3.6 L2.8 3 L7.6 4.8 V5.6Z" fill="#35586a"/></svg>
<div class="a" style="left:0px;top:673.6px;width:1200px;height:1.4px;background:#2c362a;"></div>
</body></html>
